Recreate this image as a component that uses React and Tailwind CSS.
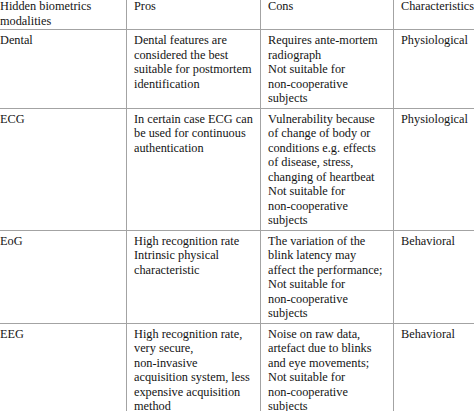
const rows = [
  {
    name: ["Dental"],
    pros: ["Dental features are", "considered the best", "suitable for postmortem", "identification"],
    cons: ["Requires ante-mortem", "radiograph", "Not suitable for", "non-cooperative", "subjects"],
    kind: "Physiological",
  },
  {
    name: ["ECG"],
    pros: ["In certain case ECG can", "be used for continuous", "authentication"],
    cons: [
      "Vulnerability because",
      "of change of body or",
      "conditions e.g. effects",
      "of disease, stress,",
      "changing of heartbeat",
      "Not suitable for",
      "non-cooperative",
      "subjects",
    ],
    kind: "Physiological",
  },
  {
    name: ["EoG"],
    pros: ["High recognition rate", "Intrinsic physical", "characteristic"],
    cons: [
      "The variation of the",
      "blink latency may",
      "affect the performance;",
      "Not suitable for",
      "non-cooperative",
      "subjects",
    ],
    kind: "Behavioral",
  },
  {
    name: ["EEG"],
    pros: [
      "High recognition rate,",
      "very secure,",
      "non-invasive",
      "acquisition system, less",
      "expensive acquisition",
      "method",
    ],
    cons: [
      "Noise on raw data,",
      "artefact due to blinks",
      "and eye movements;",
      "Not suitable for",
      "non-cooperative",
      "subjects",
    ],
    kind: "Behavioral",
  },
];

const Lines = ({ lines }) => (
  <>
    {lines.map((l, i) => (
      <div key={i} className="whitespace-nowrap">
        {l}
      </div>
    ))}
  </>
);

const cell = "border border-[#a3a3a3] align-top pl-[7px] pr-[6px] pt-[3px] pb-[2px]";
const head = "border border-[#a3a3a3] align-top pl-[7px] pr-[6px] pt-[3px] pb-[1px] font-normal text-left";

export default function App() {
  return (
    <div className="w-[474px] h-[411px] overflow-hidden bg-white">
      <table
        className="table-fixed border-collapse w-[535px] -ml-[8px] -mt-[5px] text-[12.3px] leading-[14.5px] text-[#141414]"
        style={{ fontFamily: '"Liberation Serif", "Times New Roman", serif' }}
      >
        <colgroup>
          <col className="w-[134px]" />
          <col className="w-[134px]" />
          <col className="w-[133px]" />
          <col className="w-[134px]" />
        </colgroup>
        <thead>
          <tr>
            <th className={head}>
              <Lines lines={["Hidden biometrics", "modalities"]} />
            </th>
            <th className={head}>Pros</th>
            <th className={head}>Cons</th>
            <th className={head}>Characteristics</th>
          </tr>
        </thead>
        <tbody>
          {rows.map((r) => (
            <tr key={r.name[0]}>
              <td className={cell}>
                <Lines lines={r.name} />
              </td>
              <td className={cell}>
                <Lines lines={r.pros} />
              </td>
              <td className={cell}>
                <Lines lines={r.cons} />
              </td>
              <td className={cell}>{r.kind}</td>
            </tr>
          ))}
        </tbody>
      </table>
    </div>
  );
}
